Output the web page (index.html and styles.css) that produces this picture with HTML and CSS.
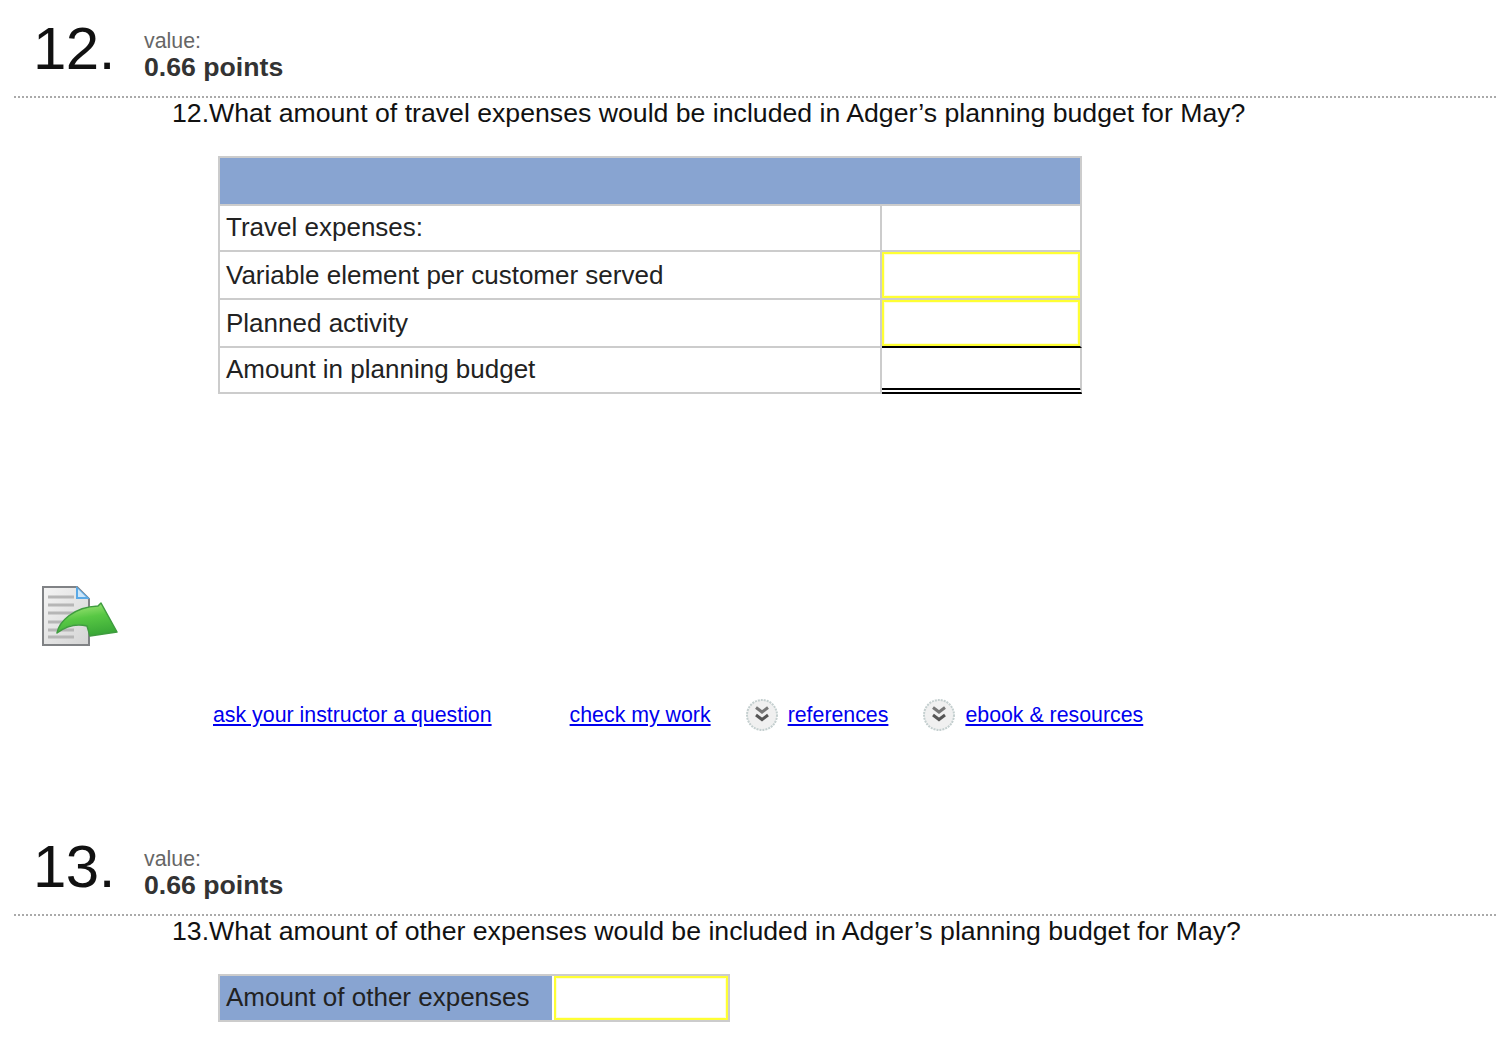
FILE: index.html
```html
<!DOCTYPE html>
<html lang="en">
<head>
  <meta charset="UTF-8">
  <title>Questions 12 and 13</title>
  <link rel="stylesheet" href="styles.css">
</head>
<body>

  <div class="question q12">
    <div class="qhead">
      <span class="qnum">12.</span>
      <div class="qvalue">
        <span class="valuelabel">value:</span>
        <strong class="points">0.66 points</strong>
      </div>
    </div>
    <p class="qtext">12.What amount of travel expenses would be included in Adger’s planning budget for May?</p>

    <table class="budget">
      <colgroup>
        <col class="labelcol">
        <col class="amountcol">
      </colgroup>
      <tr>
        <th class="headfill" colspan="2"></th>
      </tr>
      <tr class="r1">
        <td class="label">Travel expenses:</td>
        <td class="amount"></td>
      </tr>
      <tr class="r2">
        <td class="label">Variable element per customer served</td>
        <td class="amount"><input type="text" class="answer"></td>
      </tr>
      <tr class="r2">
        <td class="label">Planned activity</td>
        <td class="amount"><input type="text" class="answer"></td>
      </tr>
      <tr class="r4">
        <td class="label">Amount in planning budget</td>
        <td class="amount total"></td>
      </tr>
    </table>

    <svg class="docicon" width="78" height="62" viewBox="0 0 78 62">
      <defs>
        <linearGradient id="arrowfill" x1="0.3" y1="0" x2="0.6" y2="1">
          <stop offset="0" stop-color="#a8e87e"/>
          <stop offset="0.45" stop-color="#58c844"/>
          <stop offset="1" stop-color="#38a636"/>
        </linearGradient>
        <linearGradient id="pagefill" x1="0" y1="0" x2="1" y2="1">
          <stop offset="0" stop-color="#f4f4f4"/>
          <stop offset="1" stop-color="#d4d4d4"/>
        </linearGradient>
      </defs>
      <path d="M2 2H36L48 14V60H2Z" fill="url(#pagefill)" stroke="#808285" stroke-width="2"/>
      <path d="M35 1L49 14H35Z" fill="#5aa9e6"/>
      <path d="M37 4L45 12H37Z" fill="#cde7fa"/>
      <path d="M7 12H33M7 20H33M7 28H33M7 37H33M7 45H33M7 52H33" stroke="#b6b6b6" stroke-width="3"/>
      <path d="M16 48C18 37 32 22 57 21L60 18L76 47L49 51L46 41C34 38 25 41 16 48Z" fill="url(#arrowfill)" stroke="#3f9c3f" stroke-width="1.500" stroke-linejoin="round"/>
    </svg>

    <div class="actions">
      <a href="#" class="link ask">ask your instructor a question</a>
      <a href="#" class="link check">check my work</a>
      <span class="expand ref">
        <svg class="chevrons" width="32" height="32" viewBox="0 0 32 32">
          <circle cx="16" cy="16" r="15" fill="#f0f0f0" stroke="#c4cfcf" stroke-width="2" stroke-dasharray="2 1"/>
          <path d="M10 8.500L16 13L22 8.500" fill="none" stroke="#777" stroke-width="3"/>
          <path d="M10 16L16 20.500L22 16" fill="none" stroke="#555" stroke-width="3"/>
        </svg>
        <a href="#" class="link">references</a>
      </span>
      <span class="expand">
        <svg class="chevrons" width="32" height="32" viewBox="0 0 32 32">
          <circle cx="16" cy="16" r="15" fill="#f0f0f0" stroke="#c4cfcf" stroke-width="2" stroke-dasharray="2 1"/>
          <path d="M10 8.500L16 13L22 8.500" fill="none" stroke="#777" stroke-width="3"/>
          <path d="M10 16L16 20.500L22 16" fill="none" stroke="#555" stroke-width="3"/>
        </svg>
        <a href="#" class="link">ebook &amp; resources</a>
      </span>
    </div>
  </div>

  <div class="question q13">
    <div class="qhead">
      <span class="qnum">13.</span>
      <div class="qvalue">
        <span class="valuelabel">value:</span>
        <strong class="points">0.66 points</strong>
      </div>
    </div>
    <p class="qtext">13.What amount of other expenses would be included in Adger’s planning budget for May?</p>

    <table class="other">
      <tr>
        <td class="otherlabel">Amount of other expenses</td>
        <td class="othervalue"><input type="text" class="answer"></td>
      </tr>
    </table>
  </div>

</body>
</html>
```

FILE: styles.css
```css
/* Reset styling */
* {
  margin: 0;
  padding: 0;
  box-sizing: border-box;
}

body {
  font-family: "Liberation Sans", Arial, sans-serif;
  background: white;
  color: #222;
  padding-top: 16px;
  overflow: hidden;
}

.qhead {
  display: flex;
  align-items: flex-start;
  height: 82px;
  margin-left: 14px;
  width: 1482px;
  padding-left: 19px;
  border-bottom: 2px dotted #aaa;
}

.qnum {
  font-size: 60px;
  line-height: 66px;
  width: 111px;
  letter-spacing: -0.5px;
  color: #111;
}

.qvalue {
  display: flex;
  flex-direction: column;
  padding-top: 13px;
}

.valuelabel {
  font-size: 21.33px;
  line-height: 24px;
  color: #666;
}

.points {
  font-size: 26.67px;
  line-height: 28px;
  color: #333;
}

.qtext {
  font-size: 26.67px;
  line-height: 30px;
  margin-left: 172px;
  color: #111;
}

/* Planning budget table */
.budget {
  width: 864px;
  margin: 28px 0 0 218px;
  border-collapse: separate;
  border-spacing: 0;
  table-layout: fixed;
  border-top: 2px solid #ccc;
  border-left: 2px solid #ccc;
}

.labelcol { width: 662px; }
.amountcol { width: 200px; }

.headfill {
  height: 48px;
  background-color: #88a4d1;
  border-right: 2px solid #ccc;
  border-bottom: 2px solid #ccc;
}

.label {
  font-size: 26px;
  padding-left: 6px;
  border-right: 2px solid #ccc;
  border-bottom: 2px solid #ccc;
}

.amount {
  border-right: 2px solid #ccc;
  border-bottom: 2px solid #ccc;
}

.r1 td { height: 46px; }
.r2 td { height: 48px; }
.r4 td { height: 46px; }

.r1 .label,
.r4 .label {
  padding-bottom: 2px;
}

.r2 .amount { vertical-align: top; }

.total {
  border-bottom: 6px double black;
}

.r2:nth-child(4) .amount {
  border-bottom-color: black;
}

.answer {
  display: block;
  width: 100%;
  height: 46px;
  border: 2px solid #ffff33;
  outline: 1px solid #fdfdd8;
  outline-offset: -3px;
  background: white;
}

.docicon {
  display: block;
  margin: 191px 0 0 41px;
}

.actions {
  display: flex;
  align-items: center;
  height: 34px;
  margin: 51px 0 0 213px;
}

.link {
  font-size: 21.33px;
  color: #0000ee;
}

.ask { margin-right: 78px; }
.check { margin-right: 35px; }

.expand {
  display: flex;
  align-items: center;
  gap: 10px;
}

.ref { margin-right: 35px; }

.q13 { margin-top: 102px; }

/* Single row answer table */
.other {
  width: 512px;
  margin: 28px 0 0 218px;
  border-collapse: separate;
  border-spacing: 0;
  border: 2px solid #ccc;
}

.otherlabel {
  font-size: 26px;
  height: 44px;
  padding-left: 6px;
  padding-bottom: 2px;
  background-color: #88a4d1;
  width: 332px;
}

.othervalue {
  padding-left: 2px;
}

.othervalue .answer { height: 44px; }
```
